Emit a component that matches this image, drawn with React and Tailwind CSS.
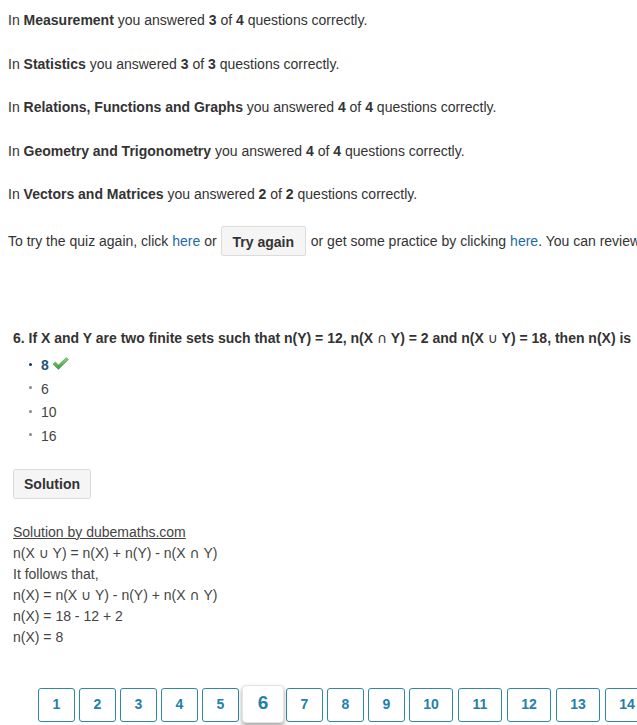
import React from 'react';

const summary = [
  { topic: 'Measurement', got: 3, of: 4 },
  { topic: 'Statistics', got: 3, of: 3 },
  { topic: 'Relations, Functions and Graphs', got: 4, of: 4 },
  { topic: 'Geometry and Trigonometry', got: 4, of: 4 },
  { topic: 'Vectors and Matrices', got: 2, of: 2 },
];

const options = [
  { label: '8', correct: true },
  { label: '6' },
  { label: '10' },
  { label: '16' },
];

const pages = [1, 2, 3, 4, 5, 6, 7, 8, 9, 10, 11, 12, 13, 14];

// set symbols get a font that actually carries them
const Sym = ({ c }) => (
  <span className="font-normal" style={{ fontFamily: '"DejaVu Sans", sans-serif' }}>{c}</span>
);
const U = () => <Sym c="∪" />;
const N = () => <Sym c="∩" />;

const CheckMark = () => (
  <svg width="17" height="13" viewBox="0 0 17 13" className="ml-[3px] -mt-[4px]">
    <defs>
      <linearGradient id="chk" x1="0" y1="0" x2="0" y2="1">
        <stop offset="0" stopColor="#8fd08a" />
        <stop offset="1" stopColor="#3f9a3c" />
      </linearGradient>
    </defs>
    <path d="M1 7.2 L3.4 5 L6.4 8 L14.4 0.6 L16.4 2.6 L6.4 12.4 Z" fill="url(#chk)" stroke="#4a9a46" strokeWidth="0.6" />
  </svg>
);

export default function App() {
  return (
    <div
      className="w-[637px] h-[725px] overflow-hidden bg-white text-[14px] text-[#333]"
      style={{ fontFamily: '"Liberation Sans", Arial, sans-serif' }}
    >
      <div className="pt-[10px] pl-[8px]">
        {summary.map((s) => (
          <p key={s.topic} className="leading-[20px] h-[20px] mb-[23.5px] whitespace-nowrap">
            In <b>{s.topic}</b> you answered <b>{s.got}</b> of <b>{s.of}</b> questions correctly.
          </p>
        ))}

        <div className="-mt-[1.5px] flex items-center h-[30px] whitespace-nowrap overflow-hidden">
          <span className="shrink-0">To try the quiz again, click</span>
          <span className="shrink-0 text-[#1b6aa5] ml-[4px]">here</span>
          <span className="shrink-0 ml-[4px]">or</span>
          <button className="shrink-0 ml-[4px] h-[30px] w-[85px] bg-[#f5f5f5] border border-[#dcdcdc] rounded-[2px] font-bold text-[#333] pt-[2px]">
            Try again
          </button>
          <span className="shrink-0 ml-[5px]">or get some practice by clicking</span>
          <span className="shrink-0 text-[#1b6aa5] ml-[4px]">here</span>
          <span className="shrink-0">. You can review your answers below.</span>
        </div>
      </div>

      <div className="pl-[13px]">
        <p className="mt-[72px] leading-[20px] h-[20px] font-bold whitespace-nowrap">
          6. If X and Y are two finite sets such that n(Y) = 12, n(X <N /> Y) = 2 and n(X <U /> Y) = 18, then n(X) is
        </p>

        <ul className="mt-[6px]">
          {options.map((o) => (
            <li key={o.label} className="flex items-center h-[23.5px] pl-[16px]">
              <span
                className={`w-[3px] h-[3px] rounded-full mr-[9px] -mt-[3px] ${o.correct ? 'bg-[#1c2a8a]' : 'bg-[#888]'}`}
              />
              {o.correct ? (
                <>
                  <span className="font-bold text-[#1f5677]">{o.label}</span>
                  <CheckMark />
                </>
              ) : (
                <span className="text-[#444]">{o.label}</span>
              )}
            </li>
          ))}
        </ul>

        <button className="mt-[21px] h-[30px] w-[78px] bg-[#f5f5f5] border border-[#dcdcdc] rounded-[2px] font-bold text-[#333]">
          Solution
        </button>

        <div className="mt-[22.5px] text-[#444] leading-[21px]">
          <p className="underline">Solution by dubemaths.com</p>
          <p>n(X <U /> Y) = n(X) + n(Y) - n(X <N /> Y)</p>
          <p>It follows that,</p>
          <p>n(X) = n(X <U /> Y) - n(Y) + n(X <N /> Y)</p>
          <p>n(X) = 18 - 12 + 2</p>
          <p>n(X) = 8</p>
        </div>
      </div>

      <div className="mt-[37px] pl-[38px] flex items-end whitespace-nowrap">
        {pages.map((n) =>
          n === 6 ? (
            <div
              key={n}
              className="shrink-0 mr-[2px] -ml-[1px] w-[42px] h-[38px] mb-[4px] rounded-[4px] bg-white shadow-[0_3px_5px_rgba(0,0,0,0.35)] border border-[#e4e4e4] flex items-center justify-center font-bold text-[19px] text-[#2580a8]"
            >
              {n}
            </div>
          ) : (
            <div
              key={n}
              className={`${n >= 10 ? 'w-[44px] mr-[5px]' : 'w-[37px] mr-[4px]'} shrink-0 h-[34px] mb-[5px] rounded-[3px] border border-[#2f86a6] flex items-center justify-center font-bold text-[14px] text-[#2580a8]`}
            >
              {n}
            </div>
          )
        )}
      </div>
    </div>
  );
}
